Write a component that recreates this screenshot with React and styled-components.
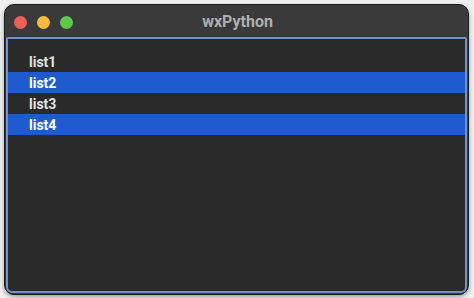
import styled, { createGlobalStyle } from 'styled-components';

const GlobalStyle = createGlobalStyle`
  html, body {
    margin: 0;
    padding: 0;
    background: #efefef;
    font-family: Roboto, 'Liberation Sans', Arial, sans-serif;
  }
`;

const Page = styled.div`
  width: 474px;
  height: 298px;
  padding: 4px 5px 5px 4px;
  box-sizing: border-box;
`;

const Window = styled.div`
  height: 100%;
  display: flex;
  flex-direction: column;
  background: #3a3a3a;
  border: 1px solid #1c1c1c;
  border-radius: 10px;
  box-shadow: 0 2px 4px rgba(0, 0, 0, 0.35);
  overflow: hidden;
`;

const TitleBar = styled.div`
  height: 32px;
  flex-shrink: 0;
  display: flex;
  align-items: center;
  justify-content: center;
  position: relative;
`;

const Lights = styled.div`
  position: absolute;
  left: 9px;
  top: 11px;
  display: flex;
  gap: 10px;
`;

const Light = styled.span`
  width: 13px;
  height: 13px;
  border-radius: 50%;
  background: ${p => p.$color};
`;

const Title = styled.div`
  font-size: 16px;
  font-weight: 700;
  color: #aeaeae;
  margin-left: 2px;
`;

const ListBox = styled.div`
  flex: 1;
  margin: 0 1px 1px 1px;
  border: 2px solid #6d94c8;
  border-radius: 2px 2px 6px 6px;
  background: #2a2a2b;
  padding-top: 12px;
`;

const Row = styled.div`
  height: 21px;
  display: flex;
  align-items: center;
  padding-left: 21px;
  font-size: 14px;
  font-weight: 700;
  color: ${p => (p.$selected ? '#ffffff' : '#e2e2e2')};
  background: ${p => (p.$selected ? '#1f5bcf' : 'transparent')};
`;

const items = [
  { label: 'list1', selected: false },
  { label: 'list2', selected: true },
  { label: 'list3', selected: false },
  { label: 'list4', selected: true },
];

export default function App() {
  return (
    <>
      <GlobalStyle />
      <Page>
        <Window>
          <TitleBar>
            <Lights>
              <Light $color="#ee5f57" />
              <Light $color="#f6bd3c" />
              <Light $color="#5dc84b" />
            </Lights>
            <Title>wxPython</Title>
          </TitleBar>
          <ListBox>
            {items.map(item => (
              <Row key={item.label} $selected={item.selected}>
                {item.label}
              </Row>
            ))}
          </ListBox>
        </Window>
      </Page>
    </>
  );
}
